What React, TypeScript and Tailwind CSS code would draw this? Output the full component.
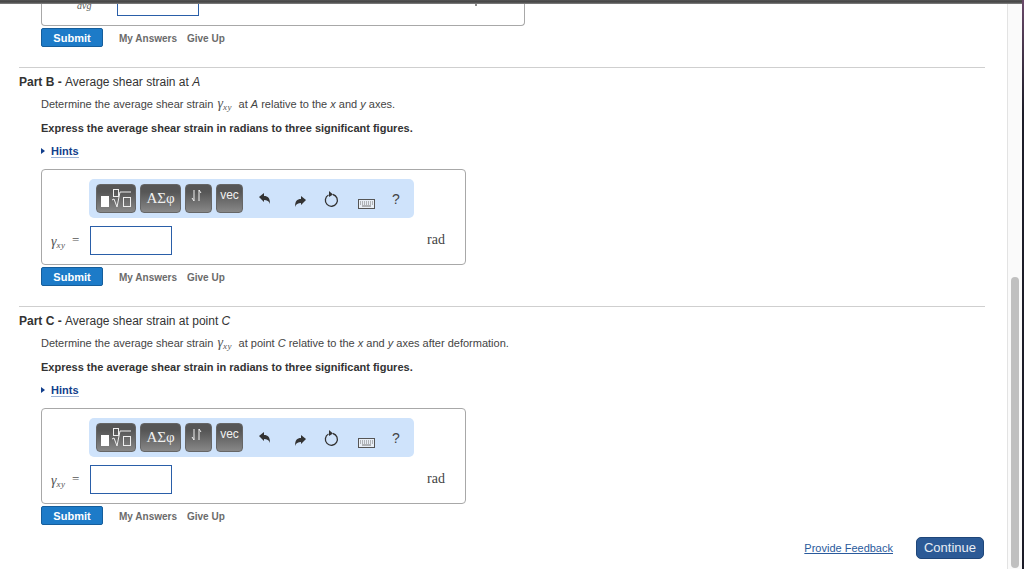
const sans = "font-['Liberation_Sans',Arial,sans-serif]";
const serif = "font-['Liberation_Serif','Times_New_Roman',serif]";

function Gamma() {
  return (
    <span className={`${serif} italic text-[#555] inline-block w-[18px] whitespace-nowrap`}>
      <span className="text-[14px] leading-[10px]">γ</span>
      <span className="text-[9px] leading-[10px] tracking-[0.5px] relative top-[2px]">xy</span>
    </span>
  );
}

function SqrtIcon() {
  return (
    <svg width="40" height="29" viewBox="0 0 40 29" className="block">
      <rect x="4" y="11" width="8" height="11" fill="#fff" />
      <rect x="16.500" y="4.500" width="5" height="7" fill="none" stroke="#eee" />
      <path d="M15 15l2-1 3 8 3-15h11" fill="none" stroke="#eee" />
      <rect x="26.500" y="12.500" width="7" height="9" fill="none" stroke="#eee" />
    </svg>
  );
}

function Toolbar() {
  const btn =
    "h-[29px] rounded-[4px] border border-[#666] bg-gradient-to-b from-[#565656] from-[25%] to-[#888888] text-[#f0f0f0]";
  return (
    <div className="ml-[47px] w-[325px] h-[39px] bg-[#cfe3fb] rounded-[5px] flex items-center pl-[7px]">
      <div className="flex items-center">
        <div className={`${btn} w-[40px]`}>
          <SqrtIcon />
        </div>
        <div className={`${btn} ml-[4px] w-[41px] text-center ${serif} text-[15px] leading-[27px]`}>ΑΣφ</div>
        <div className={`${btn} ml-[4px] w-[27px]`}>
          <svg width="25" height="27" viewBox="0 0 25 27">
            <path d="M8 5v11M8 16l-2-3M13 16V5M13 5l2 3" fill="none" stroke="#f0f0f0" />
          </svg>
        </div>
        <div className={`${btn} ml-[4px] w-[27px] text-center ${sans} text-[12px] leading-[20px]`}>vec</div>
      </div>
      <svg width="14" height="14" viewBox="0 0 14 14" className="ml-[15px]">
        <path d="M1 5l5-4v3c4 0 6 2 6 8-1-3-3-4-6-4v2z" fill="#333" />
      </svg>
      <svg width="14" height="14" viewBox="0 0 14 14" className="ml-[21px] mt-[6px]">
        <path d="M13 5L8 1v3c-4 0-6 2-6 8 1-3 3-4 6-4v2z" fill="#333" />
      </svg>
      <svg width="16" height="17" viewBox="0 0 16 17" className="ml-[17px] mt-[1px]">
        <path d="M9 3.500a6 6 0 1 1-4.500 .5" fill="none" stroke="#333" strokeWidth="1.300" />
        <path d="M5 0l4 3.500-4 2.500z" fill="#333" />
      </svg>
      <svg width="17" height="10" viewBox="0 0 17 10" className="ml-[18px] mt-[10px]">
        <rect x=".5" y=".5" width="16" height="9" fill="#e8eef5" stroke="#555" />
        <path d="M2 3h13M2 5h13" stroke="#777" strokeDasharray="1 1" />
        <path d="M4 7h9" stroke="#777" />
      </svg>
      <span className={`${sans} ml-[17px] mt-[2px] text-[14px] text-[#444]`}>?</span>
    </div>
  );
}

function Actions() {
  return (
    <div className="ml-[41px] mt-[2px] flex items-center h-[19px]">
      <button className="w-[62px] h-[19px] pt-[1px] rounded-[2px] bg-[#1d7bc8] border border-[#155e9c] text-white text-[11px] font-bold">
        Submit
      </button>
      <span className="ml-[16px] pt-[2px] text-[10px] font-bold text-[#6b6b6b]">My Answers</span>
      <span className="ml-[10px] pt-[2px] text-[10px] font-bold text-[#6b6b6b]">Give Up</span>
    </div>
  );
}

function Part({ letter, title, at, prompt }: { letter: string; title: React.ReactNode; at: React.ReactNode; prompt: string }) {
  return (
    <section>
      <div className="ml-[19px] w-[966px] border-t border-[#cfcfcf]" />
      <h2 className="ml-[19px] mt-[7px] h-[15px] text-[12px] leading-[15px] text-[#333]">
        <b>Part {letter} - </b>
        {title}
      </h2>
      <p className="ml-[41px] mt-[7px] h-[14px] text-[11px] leading-[14px] text-[#444] whitespace-nowrap">
        Determine the average shear strain <span className="ml-[1px]"><Gamma /></span> {at}
      </p>
      <p className="ml-[41px] mt-[10px] h-[14px] text-[11px] leading-[14px] font-bold text-[#333]">{prompt}</p>
      <p className="ml-[41px] mt-[9px] h-[14px] text-[11px] leading-[14px] font-bold flex items-center">
        <span className="w-0 h-0 border-y-[3px] border-y-transparent border-l-[4px] border-l-[#123f8c] mr-[6px]" />
        <span className="text-[#123f8c] border-b border-[#9db4d8] leading-[12px]">Hints</span>
      </p>
      <div className="ml-[41px] mt-[11px] w-[425px] h-[96px] border border-[#a8a8a8] rounded-[4px] pt-[9px]">
        <Toolbar />
        <div className="mt-[8px] flex items-center h-[29px]">
          <span className="w-[48px] pl-[9px] flex items-center text-[#555] whitespace-nowrap">
            <Gamma />
            <span className={`${serif} ml-[3px] -mt-[1px] text-[13px]`}>=</span>
          </span>
          <div className="w-[82px] h-[29px] border border-[#2a5ea8] bg-white" />
          <span className={`ml-auto mr-[20px] -mt-[3px] ${serif} text-[14px] text-[#444]`}>rad</span>
        </div>
      </div>
      <Actions />
    </section>
  );
}

export default function App() {
  const prompt = "Express the average shear strain in radians to three significant figures.";
  return (
    <div className={`${sans} w-[1024px] h-[569px] overflow-hidden bg-white flex`}>
      <div className="w-[1022px] shrink-0 flex flex-col">
        <div className="h-[4px] shrink-0 bg-gradient-to-b from-[#555] via-[#444] to-[#888]" />
        <div className="flex-1 flex min-h-0">
          <main className="w-[1007px] shrink-0">
            <div className="ml-[41px] w-[484px] h-[22px] border border-t-0 border-[#a8a8a8] rounded-b-[4px] overflow-hidden">
              <div className="flex items-start h-[12px]">
                <span className={`${serif} italic text-[10px] leading-[4px] ml-[35px] text-[#555] w-[40px]`}>avg</span>
                <div className="w-[82px] h-[12px] border-x border-b border-[#2a5ea8]" />
                <div className="ml-[276px] w-[2px] h-[2px] bg-[#888]" />
              </div>
            </div>
            <Actions />
            <div className="h-[20px]" />
            <Part
              letter="B"
              title={<>Average shear strain at <i>A</i></>}
              at={<>at <i>A</i> relative to the <i>x</i> and <i>y</i> axes.</>}
              prompt={prompt}
            />
            <div className="h-[20px]" />
            <Part
              letter="C"
              title={<>Average shear strain at point <i>C</i></>}
              at={<>at point <i>C</i> relative to the <i>x</i> and <i>y</i> axes after deformation.</>}
              prompt={prompt}
            />
            <div className="flex items-center justify-end h-[22px] mt-[12px] w-[984px]">
              <a className="text-[11px] text-[#2a5a9c] underline mr-[23px]">Provide Feedback</a>
              <button className="w-[68px] h-[22px] rounded-[5px] bg-[#2c5a96] border border-[#1f4679] text-white/90 text-[13px]">
                Continue
              </button>
            </div>
          </main>
          <aside className="w-[15px] shrink-0 bg-[#fafafa] border-l border-[#e3e3e3] px-[3px] pt-[273px]">
            <div className="w-[8px] h-[291px] rounded-full bg-[#c0c0c0]" />
          </aside>
        </div>
      </div>
      <div className="w-[2px] h-full shrink-0 bg-gradient-to-b from-[#6a4a6a] via-[#1c1c28] via-[20%] to-[#1a1a26]" />
    </div>
  );
}
